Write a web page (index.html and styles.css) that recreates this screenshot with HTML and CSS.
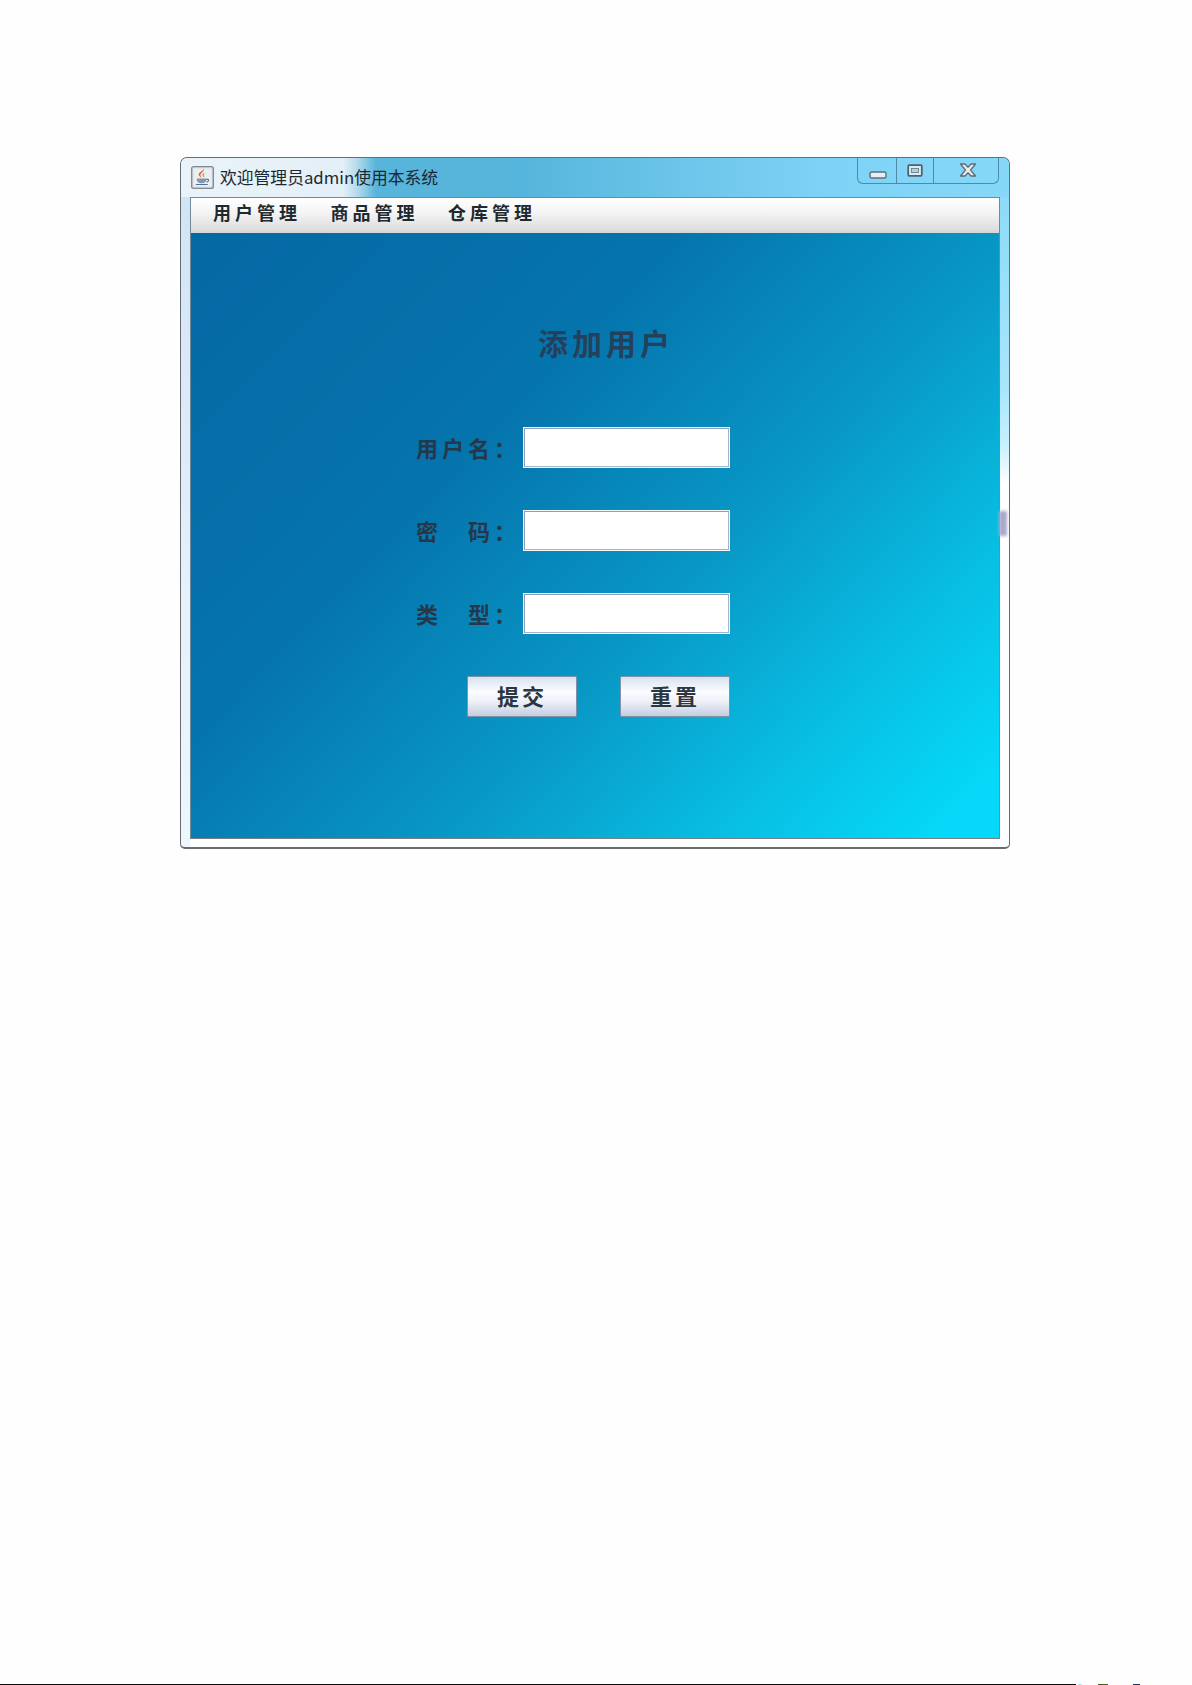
FILE: index.html
```html
<!DOCTYPE html>
<html lang="zh-CN">
<head>
<meta charset="utf-8">
<title>欢迎管理员admin使用本系统</title>
<link rel="stylesheet" href="styles.css">
</head>
<body>
<div class="page">
  <div class="stage">
    <div class="window">
      <div class="titlebar">
        <svg class="app-icon" viewBox="0 0 24 24" aria-hidden="true">
          <rect x="0.7" y="0.7" width="22.6" height="22.6" rx="2" fill="#d6dce2" stroke="#808b94" stroke-width="1.4"/>
          <rect x="2.5" y="2.5" width="19" height="19" fill="#eceff2"/>
          <path d="M13 2.800c1.600 2.700-3.200 4-3.200 6.700 0 1.100.8 1.900 1.500 2.800-2.200-1-3.400-2.200-3.200-3.900.3-2.100 4.300-2.900 4.900-5.600zM16 6.500c-2.200 1-3.500 1.900-2.800 3.400.2.600.7 1.100 1 1.700-1.500-.6-2.700-1.500-2.200-2.800.4-1.200 2.400-1.700 4-2.300z" fill="#d9622b"/>
          <path d="M6 13h10v.9c0 2.700-1.900 4.100-5 4.100s-5-1.400-5-4.100z" fill="#8496ad"/>
          <path d="M16 14h1.500c1.300 0 1.300 2.400-1.500 2.700M5 19.300h12.500" fill="none" stroke="#51719b" stroke-width="1.200"/>
        </svg>
        <span class="window-title">欢迎管理员admin使用本系统</span>
        <div class="controls">
          <div class="control control-min">
            <svg viewBox="0 0 18 8" class="glyph-min" aria-hidden="true"><rect x="1" y="1" width="16" height="6" rx="1.500" fill="#e8eef2" stroke="#5d6f7c" stroke-width="1.400"/></svg>
          </div>
          <div class="control control-max">
            <svg viewBox="0 0 16 13" class="glyph-max" aria-hidden="true"><rect x="1.200" y="1.200" width="13.600" height="10.600" rx="1" fill="#dcebf3" stroke="#4f626f" stroke-width="1.800"/><rect x="4.500" y="4.500" width="7" height="4" fill="#a9d3e6" stroke="#5f7482" stroke-width=".8"/></svg>
          </div>
          <div class="control control-close">
            <svg viewBox="0 0 18 14" class="glyph-close" aria-hidden="true"><path d="M1.500 1h4.500L9 4.300 12 1h4.500L11.500 7l5 6H12L9 9.700 6 13H1.500l5-6z" fill="#e9eef1" stroke="#5f6c74" stroke-width="1.300" stroke-linejoin="round"/></svg>
          </div>
        </div>
      </div>
      <div class="client">
        <nav class="menubar">
          <span class="menu-item">用户管理</span>
          <span class="menu-item">商品管理</span>
          <span class="menu-item">仓库管理</span>
        </nav>
        <main class="content">
          <h1 class="heading">添加用户</h1>
          <div class="form-row">
            <label class="field-label">用户名：</label>
            <div class="field"></div>
          </div>
          <div class="form-row">
            <label class="field-label">密　码：</label>
            <div class="field"></div>
          </div>
          <div class="form-row">
            <label class="field-label">类　型：</label>
            <div class="field"></div>
          </div>
          <div class="button-row">
            <button class="btn">提交</button>
            <button class="btn">重置</button>
          </div>
        </main>
      </div>
      <div class="frame-streak"></div>
    </div>
  </div>
  <div class="page-foot">
    <div class="foot-line"></div>
    <i class="tick tick-a"></i>
    <i class="tick tick-b"></i>
    <i class="tick tick-c"></i>
  </div>
</div>
</body>
</html>
```

FILE: styles.css
```css
* {
  box-sizing: border-box;
}

html,
body {
  margin: 0;
  padding: 0;
  background: #fefefe;
}

body {
  font-family: "Noto Sans CJK SC", "Noto Sans", sans-serif;
}

.page {
  height: 1685px;
  display: flex;
  flex-direction: column;
  justify-content: space-between;
  overflow: hidden;
}

.stage {
  padding: 157px 0 0 180px;
}

.window {
  position: relative;
  width: 830px;
  height: 692px;
  padding: 0 9px 8px;
  display: flex;
  flex-direction: column;
  border: 1px solid #666c70;
  border-bottom-width: 2px;
  border-radius: 7px 7px 5px 5px;
  background:
    linear-gradient(180deg, #cfe2f5 0, #e4f0fb 60%, #eef6fd 100%) no-repeat left top / 9px 100%,
    linear-gradient(180deg, #86d8f8 0, #a8e6fc 230px, #c6f0ff 285px, #fdfeff 325px) no-repeat right top / 9px 100%,
    #fdfeff;
}

.titlebar {
  height: 39px;
  margin: 0 -9px;
  padding-left: 10px;
  display: flex;
  align-items: center;
  border-radius: 6px 6px 0 0;
  background: linear-gradient(90deg, #eaf3f9 0, #e3eff7 162px, #b4dbec 176px, #58b4da 195px, #56b5dc 340px, #6cc5ea 500px, #7dd2f6 640px, #86d8f8 830px);
}

.app-icon {
  width: 23px;
  height: 23px;
  flex: none;
}

.window-title {
  margin: 0 0 2px 6px;
  font-size: 16.800px;
  line-height: 24px;
  color: #1d2730;
  white-space: nowrap;
}

.controls {
  margin-left: auto;
  margin-right: 10px;
  align-self: flex-start;
  height: 26px;
  display: flex;
  border: 1px solid #4f8aa8;
  border-top: 0;
  border-radius: 0 0 6px 6px;
}

.control {
  display: flex;
  align-items: center;
  justify-content: center;
  border-right: 1px solid #4f8aa8;
}

.control-min {
  width: 39px;
}

.control-max {
  width: 37px;
}

.control-close {
  width: 64px;
  border-right: 0;
}

.glyph-min {
  width: 18px;
  height: 8px;
  margin: 8px 0 0 2px;
}

.glyph-max {
  width: 16px;
  height: 13px;
  margin-top: 0;
}

.glyph-close {
  width: 18px;
  height: 14px;
  margin: 0 0 1px 4px;
}

.client {
  flex: 1;
  min-height: 0;
  display: flex;
  flex-direction: column;
  border: 1px solid #6f8a98;
  border-bottom-color: #7a7f84;
}

.menubar {
  height: 35px;
  padding: 0 0 5px 22px;
  display: flex;
  align-items: center;
  gap: 29.500px;
  border-bottom: 2px solid #d3d8d8;
  background: linear-gradient(180deg, #ffffff 0, #f4f4f4 45%, #dcdcdc 100%);
}

.menu-item {
  font-size: 18px;
  font-weight: 700;
  letter-spacing: 4px;
  line-height: 24px;
  color: #1f2a30;
}

.content {
  flex: 1;
  padding: 89px 0 0 225px;
  background: linear-gradient(134deg, #0568a3 0%, #0574ad 35%, #0898c6 60%, #08bfe3 80%, #05d8f8 95%);
}

.heading {
  margin: 0 0 65px 122px;
  font-size: 30px;
  font-weight: 700;
  letter-spacing: 4px;
  line-height: 40px;
  color: #25405a;
}

.form-row {
  height: 41px;
  margin-bottom: 42px;
  display: flex;
  align-items: center;
}

.field-label {
  width: 107px;
  flex: none;
  padding-bottom: 2px;
  font-size: 22px;
  font-weight: 700;
  letter-spacing: 4px;
  line-height: 30px;
  color: #25384a;
  white-space: nowrap;
}

.field {
  width: 207px;
  height: 41px;
  background: #fff;
  border: 1px solid #f4f8fb;
  box-shadow: inset 1px 1px 0 #8d9fb8, inset -1px -1px 0 #a8b5c6;
}

.button-row {
  margin-left: 51px;
  display: flex;
  gap: 43px;
}

.btn {
  width: 110px;
  height: 41px;
  padding: 0 0 3px;
  font-family: inherit;
  font-size: 22px;
  font-weight: 700;
  letter-spacing: 3px;
  color: #2a3640;
  border: 1px solid #7f93a8;
  border-radius: 1px;
  background: linear-gradient(180deg, #d9e1ee 0, #fbfcff 38%, #eef1f8 62%, #c4cee0 100%);
}

.frame-streak {
  position: absolute;
  top: 353px;
  right: 2px;
  width: 8px;
  height: 25px;
  background: #a9a9cc;
  filter: blur(1.500px);
}

.page-foot {
  height: 1px;
  position: relative;
  display: flex;
}

.foot-line {
  width: 1076px;
  height: 1px;
  background: #0c0c0c;
}

.tick {
  position: absolute;
  top: 0;
  height: 1px;
}

.tick-a {
  left: 1078px;
  width: 4px;
  background: #bfe6e6;
}

.tick-b {
  left: 1098px;
  width: 10px;
  background: #4a5a20;
}

.tick-c {
  left: 1133px;
  width: 7px;
  background: #22305a;
}
```
